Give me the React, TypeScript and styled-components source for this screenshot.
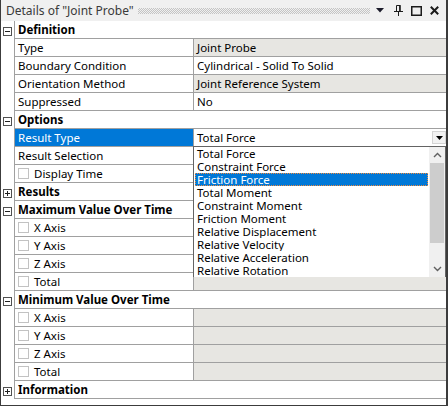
import React from "react";
import styled, { createGlobalStyle } from "styled-components";

const GlobalStyle = createGlobalStyle`
  html, body {
    margin: 0;
    padding: 0;
    background: #ffffff;
  }
  body {
    font-family: "Noto Sans", "Open Sans", sans-serif;
    font-size: 11.5px;
    color: #000000;
  }
`;

type GroupRow = { kind: "group"; label: string; open: boolean };
type PropRow = {
  kind: "prop";
  label: string;
  value?: string;
  readOnly?: boolean;
  check?: boolean;
  selected?: boolean;
  combo?: boolean;
};
type RowData = GroupRow | PropRow;

const rows: RowData[] = [
  { kind: "group", label: "Definition", open: true },
  { kind: "prop", label: "Type", value: "Joint Probe", readOnly: true },
  { kind: "prop", label: "Boundary Condition", value: "Cylindrical - Solid To Solid" },
  { kind: "prop", label: "Orientation Method", value: "Joint Reference System", readOnly: true },
  { kind: "prop", label: "Suppressed", value: "No" },
  { kind: "group", label: "Options", open: true },
  { kind: "prop", label: "Result Type", value: "Total Force", selected: true, combo: true },
  { kind: "prop", label: "Result Selection" },
  { kind: "prop", label: "Display Time", check: true },
  { kind: "group", label: "Results", open: false },
  { kind: "group", label: "Maximum Value Over Time", open: true },
  { kind: "prop", label: "X Axis", check: true, readOnly: true },
  { kind: "prop", label: "Y Axis", check: true, readOnly: true },
  { kind: "prop", label: "Z Axis", check: true, readOnly: true },
  { kind: "prop", label: "Total", check: true, readOnly: true },
  { kind: "group", label: "Minimum Value Over Time", open: true },
  { kind: "prop", label: "X Axis", check: true, readOnly: true },
  { kind: "prop", label: "Y Axis", check: true, readOnly: true },
  { kind: "prop", label: "Z Axis", check: true, readOnly: true },
  { kind: "prop", label: "Total", check: true, readOnly: true },
  { kind: "group", label: "Information", open: false },
];

const options = [
  "Total Force",
  "Constraint Force",
  "Friction Force",
  "Total Moment",
  "Constraint Moment",
  "Friction Moment",
  "Relative Displacement",
  "Relative Velocity",
  "Relative Acceleration",
  "Relative Rotation",
];

const Panel = styled.div`
  position: relative;
  width: 448px;
  height: 406px;
  box-sizing: border-box;
  border-left: 1px solid #3c3c3c;
  border-right: 2px solid #3c3c3c;
  border-bottom: 1px solid #3c3c3c;
  background: #ffffff;
  overflow: hidden;
`;

const TitleBar = styled.div`
  display: flex;
  align-items: center;
  height: 21px;
  background: #f0f0f0;
  padding-left: 5px;
  padding-right: 7px;
  color: #3a3a3a;
  font-size: 12px;
`;

const TitleText = styled.span`
  white-space: nowrap;
`;

const Grip = styled.div`
  flex: 1;
  height: 6px;
  margin: 1px 6px 0 4px;
  background: repeating-conic-gradient(#c4c4c4 0 25%, transparent 0 50%) 0 0 / 2px 2px;
`;

const TitleIcons = styled.div`
  display: flex;
  align-items: center;
  gap: 8px;
  color: #1b1b1b;
  svg {
    display: block;
  }
`;

const Body = styled.div`
  display: flex;
  flex-direction: column;
`;

const Row = styled.div`
  display: flex;
  height: 18px;
`;

const Gutter = styled.div`
  width: 13px;
  flex: none;
  display: flex;
  align-items: flex-start;
  padding: 6px 0 0 2px;
  box-sizing: border-box;
`;

const Expander = styled.div`
  position: relative;
  width: 9px;
  height: 9px;
  box-sizing: border-box;
  border: 1px solid #505050;
  background: #ffffff;
  &::before {
    content: "";
    position: absolute;
    left: 1px;
    top: 3px;
    width: 5px;
    height: 1px;
    background: #202020;
  }
`;

const ExpanderPlus = styled(Expander)`
  &::after {
    content: "";
    position: absolute;
    left: 3px;
    top: 1px;
    width: 1px;
    height: 5px;
    background: #202020;
  }
`;

const Cells = styled.div`
  flex: 1;
  display: flex;
  border-left: 1px solid #a0a0a0;
  border-bottom: 1px solid #a0a0a0;
  height: 18px;
  box-sizing: border-box;
`;

const GroupLabel = styled.div`
  flex: 1;
  padding-left: 3px;
  line-height: 17px;
  font-weight: 700;
  white-space: nowrap;
`;

const NameCell = styled.div<{ $selected?: boolean }>`
  width: 179px;
  flex: none;
  box-sizing: border-box;
  border-right: 1px solid #a0a0a0;
  padding-left: 3px;
  display: flex;
  align-items: center;
  gap: 5px;
  line-height: 17px;
  white-space: nowrap;
  background: ${(p) => (p.$selected ? "#0078d7" : "#ffffff")};
  color: ${(p) => (p.$selected ? "#ffffff" : "#000000")};
`;

const CheckBox = styled.span`
  width: 11px;
  height: 11px;
  box-sizing: border-box;
  border: 1px solid #c2c2c2;
  background: #ffffff;
  flex: none;
`;

const ValueCell = styled.div<{ $readOnly?: boolean }>`
  position: relative;
  flex: 1;
  display: flex;
  align-items: center;
  padding-left: 3px;
  line-height: 17px;
  white-space: nowrap;
  background: ${(p) => (p.$readOnly ? "#e7e6e2" : "#ffffff")};
`;

const ComboText = styled.span`
  flex: 1;
`;

const ComboButton = styled.span`
  width: 14px;
  height: 13px;
  box-sizing: border-box;
  border: 1px solid #d4d4d4;
  background: #f2f2f2;
  display: flex;
  align-items: center;
  justify-content: center;
`;

const DropList = styled.div`
  position: absolute;
  top: 17px;
  left: -1px;
  right: 0;
  height: 131px;
  box-sizing: border-box;
  border: 1px solid #646464;
  border-bottom: none;
  background: #ffffff;
  display: flex;
  z-index: 2;
`;

const Items = styled.div`
  flex: 1;
  display: flex;
  flex-direction: column;
  padding: 0 1px;
`;

const Item = styled.div<{ $active?: boolean }>`
  height: 13px;
  line-height: 13px;
  padding-left: 2px;
  box-sizing: border-box;
  white-space: nowrap;
  overflow: hidden;
  background: ${(p) => (p.$active ? "#0078d7" : "transparent")};
  color: ${(p) => (p.$active ? "#ffffff" : "#000000")};
  outline: ${(p) => (p.$active ? "1px dotted #f08a3c" : "none")};
  outline-offset: -1px;
`;

const ScrollBar = styled.div`
  width: 16px;
  flex: none;
  background: #f0f0f0;
  display: flex;
  flex-direction: column;
`;

const ScrollArrow = styled.div`
  height: 16px;
  display: flex;
  align-items: center;
  justify-content: center;
`;

const Thumb = styled.div`
  height: 80px;
  margin: 0 1px;
  background: #cdcdcd;
`;

const Track = styled.div`
  flex: 1;
`;

const Chevron = ({ up }: { up?: boolean }) => (
  <svg width="9" height="6" viewBox="0 0 9 6">
    <polyline
      points={up ? "1,5 4.5,1.5 8,5" : "1,1 4.5,4.5 8,1"}
      fill="none"
      stroke="#606060"
      strokeWidth="1.4"
    />
  </svg>
);

const Dropdown = () => (
  <DropList>
    <Items>
      {options.map((o) => (
        <Item key={o} $active={o === "Friction Force"}>
          {o}
        </Item>
      ))}
    </Items>
    <ScrollBar>
      <ScrollArrow>
        <Chevron up />
      </ScrollArrow>
      <Thumb />
      <Track />
      <ScrollArrow>
        <Chevron />
      </ScrollArrow>
    </ScrollBar>
  </DropList>
);

const TitleIconSet = () => (
  <TitleIcons>
    <svg width="8" height="5" viewBox="0 0 8 5">
      <polygon points="0,0 8,0 4,4.5" fill="#1b1b2a" />
    </svg>
    <svg width="9" height="11" viewBox="0 0 9 11" style={{ marginLeft: 2 }}>
      <path d="M2.5 0.5 H6.5 M2.5 0.5 V6.5 M5.8 0.5 V6.5 M0 6.5 H9 M4.5 6.5 V11" fill="none" stroke="#1b1b1b" strokeWidth="1" />
      <rect x="5.3" y="0.5" width="1.4" height="6" fill="#1b1b1b" />
    </svg>
    <svg width="11" height="10" viewBox="0 0 11 10">
      <rect x="0.75" y="0.75" width="9.5" height="8.5" fill="none" stroke="#1b1b1b" strokeWidth="1.5" />
    </svg>
    <svg width="9" height="9" viewBox="0 0 9 9">
      <path d="M0.8 0.8 L8.2 8.2 M8.2 0.8 L0.8 8.2" stroke="#1b1b1b" strokeWidth="2" />
    </svg>
  </TitleIcons>
);

const App = () => (
  <>
    <GlobalStyle />
    <Panel>
      <TitleBar>
        <TitleText>Details of "Joint Probe"</TitleText>
        <Grip />
        <TitleIconSet />
      </TitleBar>
      <Body>
        {rows.map((r, i) =>
          r.kind === "group" ? (
            <Row key={i}>
              <Gutter>{r.open ? <Expander /> : <ExpanderPlus />}</Gutter>
              <Cells>
                <GroupLabel>{r.label}</GroupLabel>
              </Cells>
            </Row>
          ) : (
            <Row key={i}>
              <Gutter />
              <Cells>
                <NameCell $selected={r.selected}>
                  {r.check && <CheckBox />}
                  {r.label}
                </NameCell>
                <ValueCell $readOnly={r.readOnly}>
                  {r.combo ? (
                    <>
                      <ComboText>{r.value}</ComboText>
                      <ComboButton>
                        <svg width="7" height="4" viewBox="0 0 7 4">
                          <polygon points="0,0 7,0 3.5,4" fill="#000" />
                        </svg>
                      </ComboButton>
                      <Dropdown />
                    </>
                  ) : (
                    r.value
                  )}
                </ValueCell>
              </Cells>
            </Row>
          )
        )}
      </Body>
    </Panel>
  </>
);

export default App;
